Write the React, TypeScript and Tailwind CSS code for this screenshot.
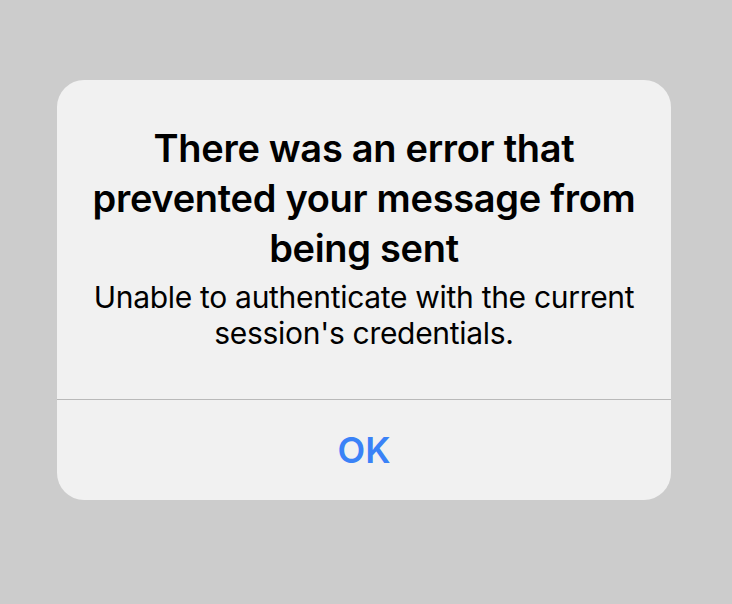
export default function App() {
  return (
    <div className="min-h-screen w-full bg-[#cccccc] flex pl-[57px] pt-[80px] font-['Inter','Liberation_Sans',sans-serif]">
      <div className="w-[614px] h-[420px] rounded-[27px] bg-[#f1f1f1] flex flex-col overflow-hidden">
        <div className="flex flex-col items-center px-[24px] pt-[43px] pb-[48px] text-center">
          <h1 className="text-[38px] leading-[50px] font-semibold tracking-[-0.3px] text-black">
            There was an error that prevented your message from being sent
          </h1>
          <p className="mt-[6px] px-[12px] text-[30px] leading-[36px] tracking-[-0.3px] text-black">
            Unable to authenticate with the current session's credentials.
          </p>
        </div>
        <div className="border-t border-[#b9b9b9]" />
        <button className="flex-1 flex items-center justify-center text-[36px] font-semibold text-[#3a82f7]">
          OK
        </button>
      </div>
    </div>
  );
}
